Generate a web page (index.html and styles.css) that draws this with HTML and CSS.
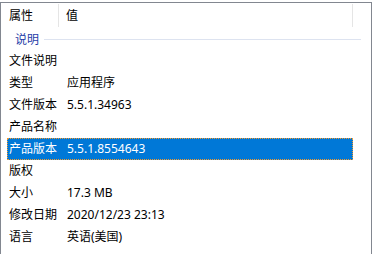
FILE: index.html
```html
<!DOCTYPE html>
<html lang="zh-CN">

<head>
    <meta charset="UTF-8">
    <title>属性</title>
    <link rel="stylesheet" href="styles.css">
</head>

<body>
    <div class="panel">
        <!-- Column headers -->
        <div class="header">
            <div class="hcell name">属性</div>
            <div class="sep"></div>
            <div class="hcell value">值</div>
            <div class="sep"></div>
        </div>

        <!-- Group: 说明 -->
        <div class="group">
            <span class="group-title">说明</span>
            <span class="group-line"></span>
        </div>

        <div class="rows">
            <div class="row"><span>文件说明</span><span></span></div>
            <div class="row"><span>类型</span><span>应用程序</span></div>
            <div class="row"><span>文件版本</span><span>5.5.1.34963</span></div>
            <div class="row"><span>产品名称</span><span></span></div>
            <div class="row selected"><span>产品版本</span><span>5.5.1.8554643</span></div>
            <div class="row"><span>版权</span><span></span></div>
            <div class="row"><span>大小</span><span>17.3 MB</span></div>
            <div class="row"><span>修改日期</span><span>2020/12/23 23:13</span></div>
            <div class="row"><span>语言</span><span>英语(美国)</span></div>
        </div>
    </div>
</body>

</html>
```

FILE: styles.css
```css
html,
body {
    margin: 0;
    background: #ffffff;
}

body {
    font-family: "Noto Sans", "Noto Sans CJK SC", sans-serif;
    font-size: 12px;
    color: #000000;
    overflow: hidden;
}

.panel {
    margin-top: 2px;
    width: 370px;
    height: 260px;
    border: 1px solid #828790;
    border-bottom: none;
}

/* Header row with column separators */
.header {
    display: flex;
    height: 25px;
    align-items: center;
}

.hcell {
    line-height: 25px;
}

.hcell.name {
    width: 49px;
    padding-left: 8px;
}

.hcell.value {
    width: 286px;
    padding-left: 7px;
}

.sep {
    width: 1px;
    height: 23px;
    background-color: #e5e5e5;
}

/* Group heading */
.group {
    display: flex;
    align-items: center;
    height: 22px;
    padding-left: 14px;
}

.group-title {
    color: #1e3ca8;
}

.group-line {
    width: 317px;
    height: 1px;
    margin-left: 5px;
    margin-top: 1px;
    background-color: #dde3f0;
}

.rows {
    margin-left: 6px;
    width: 346px;
}

.row {
    display: grid;
    grid-template-columns: 58px 1fr;
    height: 22px;
    line-height: 22px;
    padding-left: 2px;
    box-sizing: border-box;
    white-space: nowrap;
}

/* Selected item */
.row.selected {
    background-color: #0078d7;
    color: #ffffff;
    border: 1px dotted #f59a2c;
    padding-left: 1px;
    line-height: 20px;
}
```
